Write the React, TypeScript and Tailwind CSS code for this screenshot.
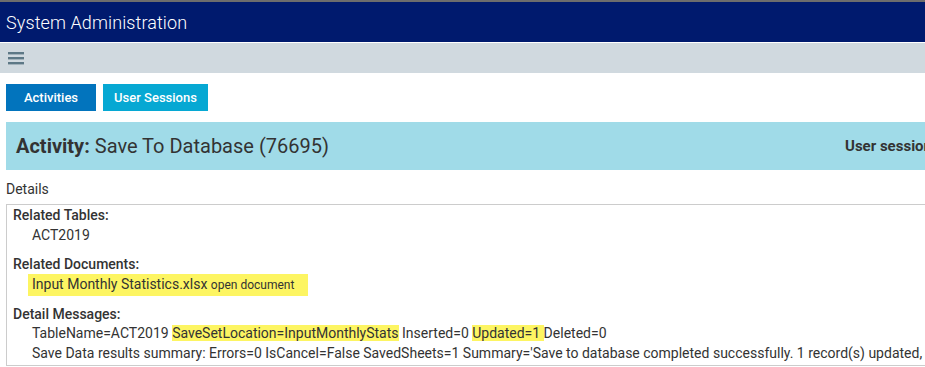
import React from "react";

const Hamburger: React.FC = () => (
  <svg width="16" height="13" viewBox="0 0 16 13" className="block">
    <rect x="0" y="0" width="16" height="2.4" fill="#5d7886" />
    <rect x="0" y="5" width="16" height="2.4" fill="#5d7886" />
    <rect x="0" y="10" width="16" height="2.4" fill="#5d7886" />
  </svg>
);

const Section: React.FC<{ title: string; children: React.ReactNode }> = ({
  title,
  children,
}) => (
  <div className="mb-[9px]">
    <div className="font-medium leading-[20px]">{title}</div>
    <div className="pl-[19px]">{children}</div>
  </div>
);

const Mark: React.FC<{ children: React.ReactNode }> = ({ children }) => (
  <span className="bg-[#fdf562]">{children}</span>
);

export default function App() {
  return (
    <div className="w-[925px] h-[367px] overflow-hidden bg-white text-[#333] font-['Roboto',sans-serif] text-[14px]">
      <div className="w-[1100px]">
        {/* Title bar */}
        <div className="border-t-2 border-[#6d6d6d] bg-[#001a6e] h-[42px] flex items-center px-[6px]">
          <span className="text-white text-[18px] font-light tracking-[0.1px]">
            System Administration
          </span>
        </div>

        {/* Toolbar */}
        <div className="bg-[#d0d9df] h-[30px] mt-px flex items-center px-[8px]">
          <Hamburger />
        </div>

        {/* Tabs */}
        <div className="flex gap-[7px] px-[6px] mt-[11px]">
          <button className="h-[27px] w-[90px] bg-[#0274bd] text-white font-medium text-[13px]">
            Activities
          </button>
          <button className="h-[27px] w-[105px] bg-[#06a8d3] text-white font-medium text-[13px]">
            User Sessions
          </button>
        </div>

        {/* Activity header */}
        <div className="mx-[6px] mt-[11px] h-[48px] bg-[#a0dbe8] flex items-center pl-[10px]">
          <div className="w-[829px] text-[20px]">
            <span className="font-bold">Activity:</span> Save To Database (76695)
          </div>
          <div className="text-[15px] font-bold">User session: 12345</div>
        </div>

        {/* Details */}
        <div className="px-[6px] mt-[9px] leading-[20px]">Details</div>
        <div className="mx-[6px] mt-[5px] border border-[#cccccc] px-[6px] pb-[2px] leading-[20px]">
          <Section title="Related Tables:">
            <div>ACT2019</div>
          </Section>
          <Section title="Related Documents:">
            <div className="-ml-[4px] inline-block bg-[#fdf562] w-[280px] px-[4px] leading-[21px]">
              Input Monthly Statistics.xlsx{" "}
              <span className="text-[12px]">open document</span>
            </div>
          </Section>
          <div>
            <div className="font-medium leading-[18px]">Detail Messages:</div>
            <div className="pl-[19px]">
              <div className="whitespace-nowrap">
                TableName=ACT2019 <Mark>SaveSetLocation=InputMonthlyStats</Mark>{" "}
                Inserted=0 <Mark>Updated=1 </Mark>Deleted=0
              </div>
              <div className="whitespace-nowrap">
                Save Data results summary: Errors=0 IsCancel=False SavedSheets=1
                Summary='Save to database completed successfully. 1 record(s)
                updated, 0 record(s) inserted.'
              </div>
            </div>
          </div>
        </div>
      </div>
    </div>
  );
}
